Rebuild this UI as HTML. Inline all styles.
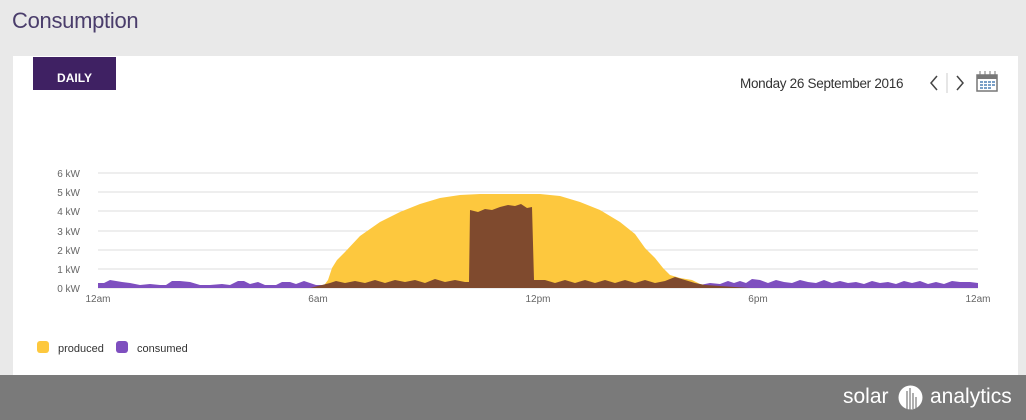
<!DOCTYPE html>
<html><head><meta charset="utf-8"><style>
body{margin:0;width:1026px;height:420px;background:#e9e9e9;font-family:"Liberation Sans",sans-serif;position:relative;overflow:hidden}
.title{position:absolute;left:12px;top:8px;font-size:22px;color:#4a3d6b;font-weight:300;letter-spacing:-0.3px}
.card{position:absolute;left:13px;top:56px;width:1005px;height:319px;background:#fff}
.daily{position:absolute;left:33px;top:57px;width:83px;height:33px;background:#3f2163;color:#fff;font-weight:bold;font-size:12px;text-align:center;line-height:42px}
.date{position:absolute;left:740px;top:76px;font-size:13.5px;color:#333;letter-spacing:-0.3px}
.footer{position:absolute;left:0;top:375px;width:1026px;height:45px;background:#7a7a7a}
</style></head><body>
<div class="title">Consumption</div>
<div class="card"></div>
<div class="daily">DAILY</div>
<div class="date">Monday 26 September 2016</div>
<svg style="position:absolute;left:0;top:0" width="1026" height="420">
<g stroke="#444" stroke-width="1.5" fill="none">
<path d="M937 76 L931 83 L937 90"/><path d="M957 76 L963 83 L957 90"/>
</g>
<line x1="947" y1="73" x2="947" y2="93" stroke="#ccc"/>
<rect x="977" y="75" width="20" height="16" fill="#fff" stroke="#777" stroke-width="1.5"/>
<rect x="977" y="75" width="20" height="4" fill="#777"/>
<g fill="#7aa0c8"><rect x="980" y="81" width="3" height="2"/><rect x="984" y="81" width="3" height="2"/><rect x="988" y="81" width="3" height="2"/><rect x="992" y="81" width="3" height="2"/><rect x="980" y="84" width="3" height="2"/><rect x="984" y="84" width="3" height="2"/><rect x="988" y="84" width="3" height="2"/><rect x="992" y="84" width="3" height="2"/><rect x="980" y="87" width="3" height="2"/><rect x="984" y="87" width="3" height="2"/><rect x="988" y="87" width="3" height="2"/></g>
<g stroke="#777" fill="none"><path d="M980 75v-4M985 75v-4M990 75v-4M995 75v-4"/></g>
<g stroke="#ddd" stroke-width="1">
<line x1="98" y1="173" x2="978" y2="173"/><line x1="98" y1="192" x2="978" y2="192"/><line x1="98" y1="211" x2="978" y2="211"/><line x1="98" y1="231" x2="978" y2="231"/><line x1="98" y1="250" x2="978" y2="250"/><line x1="98" y1="269" x2="978" y2="269"/><line x1="98" y1="288" x2="978" y2="288"/>
</g>
<g font-size="10" fill="#666" text-anchor="end">
<text x="80" y="177">6 kW</text><text x="80" y="196">5 kW</text><text x="80" y="215">4 kW</text><text x="80" y="235">3 kW</text><text x="80" y="254">2 kW</text><text x="80" y="273">1 kW</text><text x="80" y="292">0 kW</text>
</g>
<g font-size="10" fill="#666" text-anchor="middle">
<text x="98" y="302">12am</text><text x="318" y="302">6am</text><text x="538" y="302">12pm</text><text x="758" y="302">6pm</text><text x="978" y="302">12am</text>
</g>
<path fill="#7e4fbf" d="M98 288 L98 283 L104 283 L110 280 L122 282 L130 283 L140 285 L150 284 L160 285 L166 285 L172 281 L180 281 L190 282 L200 285 L210 285 L222 284 L230 285 L238 281 L244 281 L250 284 L258 282 L265 285 L276 285 L282 282 L290 282 L296 284 L304 281 L310 283 L316 285 L325 285 L700 285 L710 283 L720 284 L728 281 L734 283 L740 281 L746 283 L752 279 L760 280 L768 283 L776 280 L784 282 L792 283 L800 280 L808 282 L816 283 L824 280 L832 283 L840 281 L848 283 L856 282 L864 284 L872 281 L880 283 L888 282 L896 284 L904 281 L912 283 L920 281 L928 284 L936 282 L944 284 L952 281 L960 282 L970 282 L978 283 L978 288 Z"/>
<path fill="#fdc83e" d="M322 288 L328 280 L332 268 L337 260 L345 252 L360 236 L380 222 L400 212 L420 204 L440 198 L460 195 L480 194 L540 194 L560 196 L580 202 L600 210 L620 222 L635 234 L645 248 L655 258 L663 268 L670 275 L680 278 L692 280 L700 284 L715 288 Z"/>
<path fill="#7f4a2e" d="M310 288 L322 285 L330 283 L336 281 L345 283 L355 281 L365 283 L375 280 L385 283 L395 280 L405 282 L415 280 L425 283 L435 279 L445 282 L455 280 L465 282 L469 282 L470 210 L478 212 L485 209 L492 210 L500 207 L508 205 L515 206 L521 204 L527 208 L532 207 L534 280 L545 280 L555 283 L565 280 L575 283 L585 280 L595 283 L605 280 L615 283 L625 280 L635 283 L645 280 L655 283 L665 281 L675 277 L685 280 L695 283 L705 285 L720 286 L750 288 Z"/>
<rect x="37" y="341" width="12" height="12" rx="3" fill="#fdc83e"/>
<text x="58" y="352" font-size="11" fill="#333">produced</text>
<rect x="116" y="341" width="12" height="12" rx="3" fill="#7e4fbf"/>
<text x="137" y="352" font-size="11" fill="#333">consumed</text>
</svg>
<div class="footer"></div>
<div style="position:absolute;left:843px;top:385px;font-size:21px;color:#fff;font-weight:300">solar</div>
<svg style="position:absolute;left:898px;top:385px" width="25" height="25"><circle cx="12.5" cy="12.5" r="12" fill="#fff"/><g stroke="#7a7a7a" stroke-width="1.2"><path d="M9 6v18M12 3v22M15 8v16M18 12v12"/></g></svg>
<div style="position:absolute;left:930px;top:385px;font-size:21px;color:#fff;font-weight:300">analytics</div>
</body></html>
